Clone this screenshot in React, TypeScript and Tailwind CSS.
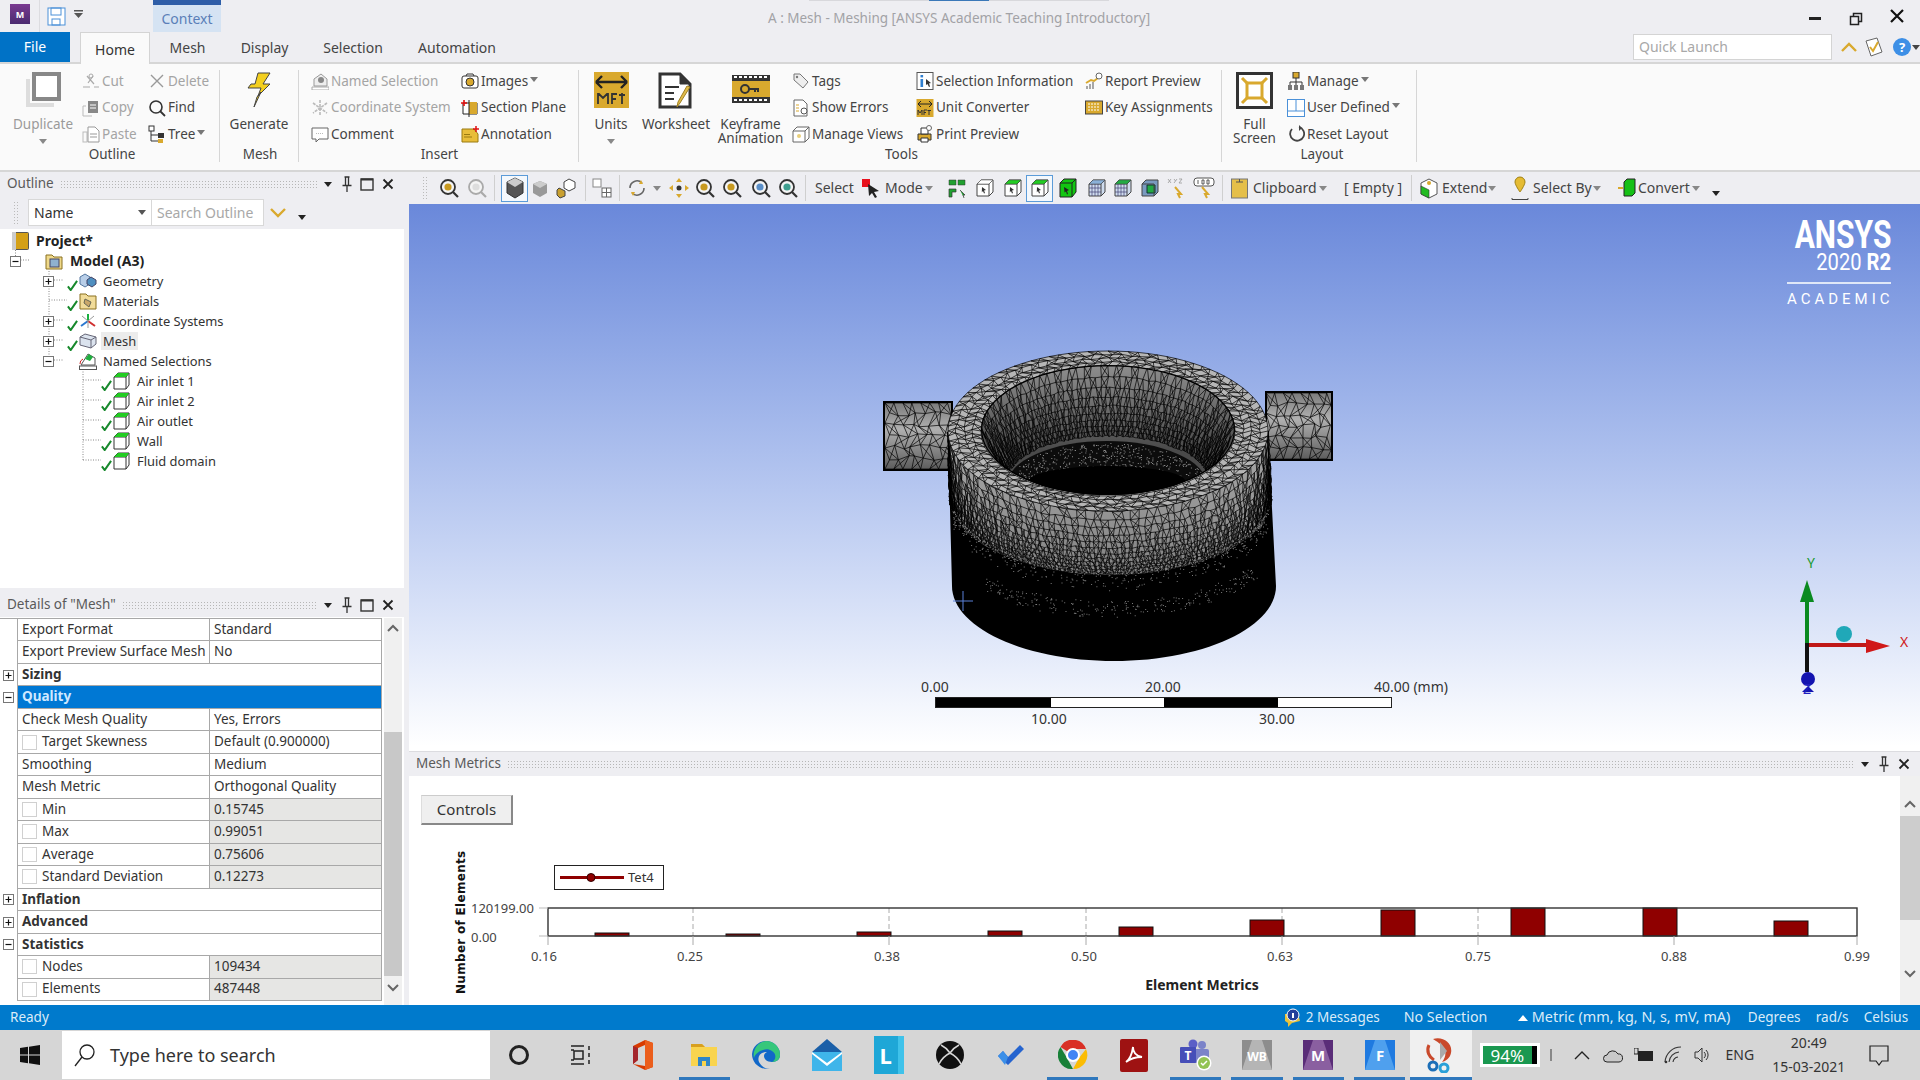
import React from "react";

/* ---------- procedural mesh ---------- */
let seed = 12345;
const rnd = () => {
  seed = (seed * 1664525 + 1013904223) % 4294967296;
  return seed / 4294967296;
};
const jit = (a: number) => (rnd() - 0.5) * 2 * a;
const lerp = (a: number, b: number, t: number) => a + (b - a) * t;
type P = [number, number];
const f = (n: number) => n.toFixed(1);
const seg = (a: P, b: P) => `M${f(a[0])} ${f(a[1])}L${f(b[0])} ${f(b[1])}`;
const dot = (x: number, y: number) => `M${f(x)} ${f(y)}h1v1h-1z`;

function meshRows(rows: P[][], closed = false) {
  let d = "";
  rows.forEach((row, i) => {
    for (let j = 0; j < row.length - 1; j++) d += seg(row[j], row[j + 1]);
    if (closed) d += seg(row[row.length - 1], row[0]);
    const next = rows[i + 1];
    if (!next) return;
    const ratio = next.length / row.length;
    row.forEach((p, j) => {
      const k = Math.round(j * ratio);
      d += seg(p, next[Math.min(k, next.length - 1)]);
      const k2 = (i + j) % 2 === 0 ? k + 1 : k - 1;
      if (k2 >= 0 && k2 < next.length) d += seg(p, next[k2]);
    });
  });
  return d;
}

const CX = 1108;
const wallPt = (th: number, h: number): P => {
  const k = h / 155;
  return [CX + 6 * k + lerp(160, 162, k) * Math.cos(th), 431 + h + lerp(80, 75, k) * Math.sin(th)];
};

function buildRim() {
  const rows: P[][] = [];
  const n = 100;
  for (let r = 0; r <= 4; r++) {
    const t = r / 4;
    const row: P[] = [];
    for (let i = 0; i < n; i++) {
      const th = ((i + (r % 2) * 0.5) / n) * Math.PI * 2;
      const a = r === 0 || r === 4 ? 0 : 1.2;
      row.push([CX + lerp(127, 160, t) * Math.cos(th) + jit(a), 431 + lerp(65, 80, t) * Math.sin(th) + jit(a * 0.7)]);
    }
    rows.push(row);
  }
  return meshRows(rows, true);
}

function buildWall() {
  const rows: P[][] = [];
  let h = 0;
  while (h < 68) {
    const t = Math.min(h / 64, 1);
    const e = Math.pow(t, 1.3);
    const n = Math.round(lerp(55, 200, e));
    const row: P[] = [];
    for (let i = 0; i <= n; i++) {
      const th = (i / n) * Math.PI;
      const p = wallPt(th, h + jit(1));
      row.push([p[0] + jit(1), p[1]]);
    }
    rows.push(row);
    h += lerp(9, 2.4, e);
  }
  return meshRows(rows);
}

function buildWallDots() {
  let d = "";
  for (let i = 0; i < 520; i++) {
    const th = 0.2 + rnd() * (Math.PI - 0.4);
    const h = 62 + Math.pow(rnd(), 2.4) * 20;
    const p = wallPt(th, h);
    d += dot(p[0], p[1]);
  }
  for (let i = 0; i < 260; i++) {
    const th = 0.45 + rnd() * 2.0;
    const x = 1110 + 160 * Math.cos(th) + jit(3);
    const y = 541 + 68 * Math.sin(th) + jit(8);
    d += dot(x, y);
  }
  return d;
}

function buildInner() {
  const rows: P[][] = [];
  let t = 0;
  while (t < 1) {
    const n = Math.round(lerp(50, 140, t));
    const row: P[] = [];
    for (let i = 0; i <= n; i++) {
      const th = Math.PI + (i / n) * Math.PI;
      row.push([
        CX + lerp(127, 100, t) * Math.cos(th) + jit(0.8),
        430 + 55 * t + lerp(65, 45, t) * Math.sin(th) + jit(0.8),
      ]);
    }
    rows.push(row);
    t += lerp(0.16, 0.05, t);
  }
  return meshRows(rows);
}

function buildFloorDots() {
  let d = "";
  for (let i = 0; i < 1300; i++) {
    const a = rnd() * Math.PI * 2;
    const r = Math.sqrt(rnd());
    d += dot(1107 + 100 * r * Math.cos(a), 485 + 42 * r * Math.sin(a));
  }
  return d;
}

function buildPipe(x0: number, y0: number, x1: number, y1: number) {
  const rows: P[][] = [];
  const nr = 6;
  for (let r = 0; r <= nr; r++) {
    const y = lerp(y0, y1, r / nr);
    const row: P[] = [];
    const edge = r === 0 || r === nr;
    for (let c = 0; c <= 7; c++) {
      const x = lerp(x0, x1, (c + (r % 2 ? 0.5 : 0)) / 7.5);
      row.push([x + (c === 0 || edge ? 0 : jit(2.4)), y + (edge ? 0 : jit(2.4))]);
    }
    rows.push(row);
  }
  return meshRows(rows);
}

const ellipsePts = (cx: number, cy: number, rx: number, ry: number, a0: number, a1: number, n = 60) => {
  const o: string[] = [];
  for (let i = 0; i <= n; i++) {
    const a = lerp(a0, a1, i / n);
    o.push(`${f(cx + rx * Math.cos(a))} ${f(cy + ry * Math.sin(a))}`);
  }
  return o;
};
const bandOf = (hb: number) => {
  const top: string[] = [];
  const bot: string[] = [];
  for (let i = 0; i <= 60; i++) {
    const th = (i / 60) * Math.PI;
    const a = wallPt(th, 0);
    const b = wallPt(th, hb);
    top.push(`${f(a[0])} ${f(a[1])}`);
    bot.unshift(`${f(b[0])} ${f(b[1])}`);
  }
  return "M" + top.concat(bot).join("L") + "Z";
};
const wallBand = bandOf(66);
const wallFull = bandOf(155);
const rimPath = buildRim();
const wallPath = buildWall();
const wallDots = buildWallDots();
const innerPath = buildInner();
const floorDots = buildFloorDots();
const pipeL = buildPipe(885, 403, 952, 469);
const pipeR = buildPipe(1266, 393, 1331, 459);
const innerOutline = "M" + ellipsePts(CX, 430, 127, 65, 0, Math.PI * 2, 80).join("L") + "Z";

function MeshModel() {
  return (
    <svg className="absolute left-0 top-0" width="1511" height="542" viewBox="409 204 1511 542">
      <defs>
        <linearGradient id="pipe" x1="0" y1="0" x2="0" y2="1">
          <stop offset="0" stopColor="#7a7a7a" />
          <stop offset="0.4" stopColor="#b0b0b0" />
          <stop offset="1" stopColor="#5c5c5c" />
        </linearGradient>
        <linearGradient id="band" gradientUnits="userSpaceOnUse" x1="0" y1="470" x2="0" y2="585">
          <stop offset="0" stopColor="#a0a0a0" />
          <stop offset="1" stopColor="#808080" />
        </linearGradient>
        <linearGradient id="innerg" gradientUnits="userSpaceOnUse" x1="0" y1="365" x2="0" y2="450">
          <stop offset="0" stopColor="#8e8e8e" />
          <stop offset="1" stopColor="#4a4a4a" />
        </linearGradient>
        <clipPath id="hole">
          <path d={innerOutline} />
        </clipPath>
      </defs>
      <rect x="884" y="402" width="68" height="68" fill="url(#pipe)" stroke="#000" strokeWidth="2" />
      <path d={pipeL} stroke="#000" strokeWidth="0.7" fill="none" />
      <rect x="1266" y="392" width="66" height="68" fill="url(#pipe)" stroke="#000" strokeWidth="2" />
      <path d={pipeR} stroke="#000" strokeWidth="0.7" fill="none" />
      <path d={wallFull} fill="#000" />
      <path d={wallBand} fill="url(#band)" />
      <path d={wallPath} stroke="#000" strokeWidth="0.7" fill="none" />
      <path d={wallDots} fill="#7c7c7c" />
      <ellipse cx={CX} cy="431" rx="160" ry="80" fill="#b6b6b6" />
      <path d={rimPath} stroke="#000" strokeWidth="0.7" fill="none" />
      <g clipPath="url(#hole)">
        <path d={innerOutline} fill="url(#innerg)" />
        <path d={innerPath} stroke="#000" strokeWidth="0.7" fill="none" />
        <ellipse cx="1107" cy="485" rx="100" ry="44" fill="#0c0c0c" />
        <path d={floorDots} fill="#8a8a8a" />
        <ellipse cx="1107" cy="481" rx="78" ry="15" fill="#000" />
        <path d={innerOutline} fill="none" stroke="#000" strokeWidth="2.5" />
      </g>
      <path d="M953 601h20M963 591v20" stroke="#5a80d8" strokeWidth="1" />
    </svg>
  );
}

function Triad() {
  return (
    <svg className="absolute left-0 top-0" width="1511" height="542" viewBox="409 204 1511 542">
      <path d="M1807 643V600" stroke="#0a8a20" strokeWidth="4" />
      <path d="M1807 580l-7 22h14z" fill="#0a8a20" />
      <path d="M1807 645H1866" stroke="#c01818" strokeWidth="4" />
      <path d="M1890 646l-24-7v14z" fill="#d01818" />
      <path d="M1807 643V672" stroke="#111" strokeWidth="4" />
      <circle cx="1808" cy="679" r="7" fill="#1414b0" />
      <path d="M1808 686l-6 6h12z" fill="#1414b0" />
      <circle cx="1844" cy="634" r="8" fill="#20a8b8" />
      <text x="1807" y="568" fill="#1a9a30" fontSize="14" fontFamily="Noto Sans, sans-serif">Y</text>
      <text x="1900" y="647" fill="#d02020" fontSize="14" fontFamily="Noto Sans, sans-serif">X</text>
      <text x="1803" y="694" fill="#2020c0" fontSize="14" fontFamily="Noto Sans, sans-serif">Z</text>
    </svg>
  );
}

/* ---------- icons ---------- */
const I = ({ w = 18, h = 18, vb = "0 0 18 18", children }: { w?: number; h?: number; vb?: string; children: React.ReactNode }) => (
  <svg width={w} height={h} viewBox={vb} className="shrink-0">
    {children}
  </svg>
);
const Caret = ({ c = "#666" }: { c?: string }) => (
  <svg width="8" height="5" viewBox="0 0 8 5" className="shrink-0"><path d="M0 0h8L4 5z" fill={c} /></svg>
);
const GOLD = "#d9a92e";
const ico = {
  cut: <I><path d="M1 15h7M12 15h5M5 4l7 8M11 4L6 11" stroke="#aaa" strokeWidth="1.2" fill="none" /><circle cx="9" cy="4" r="2" stroke="#aaa" fill="none" /></I>,
  copy: <I><path d="M1 7h3M1 7v10h9" stroke="#bbb" fill="none" /><rect x="6" y="2" width="10" height="12" fill="#888" /><path d="M8 6h6M8 9h6" stroke="#fff" /></I>,
  paste: <I><rect x="1" y="7" width="4" height="10" fill="none" stroke="#bbb" /><path d="M6 2h7l4 4v11H6z" fill="#fff" stroke="#999" /><path d="M8 9h7M8 12h7" stroke="#999" /></I>,
  del: <I><path d="M3 3l12 12M15 3L3 15" stroke="#999" strokeWidth="1.4" /></I>,
  find: <I><circle cx="8" cy="8" r="6" fill="none" stroke="#333" strokeWidth="1.6" /><path d="M12 12l5 5" stroke="#333" strokeWidth="1.8" /></I>,
  tree: <I><rect x="1" y="1" width="5" height="5" fill="#fff" stroke="#333" /><rect x="10" y="8" width="6" height="5" fill="#333" /><rect x="10" y="14" width="5" height="4" fill={GOLD} /><path d="M3 6v10h7M3 10h7" stroke="#333" fill="none" /></I>,
  named: <I><path d="M1 15h17v3H1z" fill="#fff" stroke="#aaa" /><path d="M3 7l7-5 6 5v7H3z" fill="#eee" stroke="#999" /><circle cx="10" cy="8" r="3" fill="#888" /></I>,
  coord: <I><path d="M9 1v16M2 4l14 10M16 4L2 14" stroke="#bbb" strokeWidth="1.6" strokeDasharray="3 1" /></I>,
  comment: <I><path d="M1 3h16v11H8l-3 3v-3H1z" fill="#fff" stroke="#666" /><path d="M5 8.5h8" stroke="#bbb" strokeDasharray="1 1" /></I>,
  images: <I><rect x="1" y="4" width="16" height="12" rx="2" fill="#fff" stroke="#333" /><circle cx="9" cy="10" r="4" fill={GOLD} stroke="#333" /><path d="M5 4l1-2h6l1 2" fill="none" stroke="#333" /></I>,
  section: <I><path d="M2 4h14v11H2z" fill="#fff" stroke="#222" /><path d="M8 3h8v12H8z" fill={GOLD} /><path d="M8 1v17" stroke="#222" /><path d="M3 1v6M0 4h6" stroke="#e01010" strokeWidth="1.6" /></I>,
  annot: <I><path d="M1 4h12l4 5v8H1z" fill="#e8bd3a" stroke="#9a7a10" /><path d="M3 12h8M3 9.5h6" stroke="#9a7a10" /><path d="M15 1v6M12 4h6" stroke="#e01010" strokeWidth="1.5" /></I>,
  tags: <I><path d="M2 2h6l8 8-5 6-9-8z" fill="#eee" stroke="#777" /><circle cx="5" cy="5" r="1.2" fill="#777" /></I>,
  errors: <I><path d="M2 1h9l4 4v12H2z" fill="#fff" stroke="#666" /><path d="M4 6h3M4 9h3M4 12h3" stroke={GOLD} /><circle cx="12" cy="12" r="3" fill="#fff" stroke="#555" /></I>,
  views: <I><path d="M1 6l4-4h12v11l-4 4H1z" fill="#fff" stroke="#666" /><path d="M1 6h12v11M13 6l4-4" fill="none" stroke="#666" /><circle cx="7" cy="11" r="2" fill="#e9cf7a" /></I>,
  selinfo: <I><rect x="1" y="0.5" width="16" height="17" fill="#fff" stroke="#555" /><rect x="4.5" y="3" width="2.6" height="2.4" fill="#2f7fd0" /><rect x="4.5" y="7" width="2.6" height="8" fill="#2f7fd0" /><path d="M10 7l5 4-2 .5 1 3-1 .5-1.5-3-1.5 1z" fill="#333" /></I>,
  unit: <I><rect x="0.5" y="0" width="17" height="18" fill={GOLD} /><path d="M2 5h14M2 5l3-3M2 5l3 3M16 5l-3-3M16 5l-3 3" stroke="#222" fill="none" /><path d="M2 16v-5l2 3 2-3v5M8 16v-5h3M8 13.5h2M13 11v5M11.5 11.5h3.5" stroke="#333" strokeWidth="1" fill="none" /></I>,
  print: <I><path d="M2 9h13v6H2z" fill={GOLD} stroke="#333" /><path d="M5 3h7v6H5zM5 13h7v4H5z" fill="#fff" stroke="#333" /><circle cx="13" cy="3" r="2.5" fill="#fff" stroke="#666" /></I>,
  report: <I><path d="M2 17v-3M5 17v-5M8 17v-7" stroke="#555" /><path d="M1 11l5-3 3 1 4-3" stroke={GOLD} strokeWidth="2" fill="none" /><circle cx="14" cy="4" r="3" fill="#fff" stroke="#666" /></I>,
  keys: <I><rect x="0.5" y="2" width="17" height="13" fill={GOLD} stroke="#444" /><path d="M3 5h12M3 8h12M3 11h12" stroke="#fff" strokeDasharray="2 1" /></I>,
  manage: <I><rect x="6" y="0" width="6" height="6" fill={GOLD} stroke="#333" /><path d="M9 6v4M3 10h12M3 10v3M9 10v3M15 10v3" stroke="#333" fill="none" /><rect x="1" y="13" width="4" height="5" fill="#777" /><rect x="7" y="13" width="4" height="5" fill="#777" /><rect x="13" y="13" width="4" height="5" fill="#777" /></I>,
  user: <I><rect x="0.5" y="0.5" width="17" height="17" fill="#fff" stroke="#4a90d8" /><path d="M9 1v11M1 12h16" stroke="#4a90d8" /></I>,
  reset: <I><path d="M5 4a7 7 0 1 0 7-2" fill="none" stroke="#444" strokeWidth="1.8" /><path d="M12 0v6l3-3z" fill="#444" /></I>,
};

const Big = ({ w, icon, children, caret, dim }: { w: string; icon: React.ReactNode; children: React.ReactNode; caret?: boolean; dim?: boolean }) => (
  <div className={`flex flex-col items-center shrink-0 ${w} ${dim ? "text-[#9a9a9a]" : ""}`}>
    <div className="h-[42px] flex items-start justify-center pt-[4px]">{icon}</div>
    <div className="text-center leading-[14px] whitespace-nowrap pt-[7px]">{children}</div>
    {caret && <div className="mt-[8px]"><Caret c="#888" /></div>}
  </div>
);
const Sm = ({ icon, children, dim, caret }: { icon: React.ReactNode; children: React.ReactNode; dim?: boolean; caret?: boolean }) => (
  <div className={`flex items-center h-[26.5px] whitespace-nowrap ${dim ? "text-[#a4a4a4]" : ""}`}>
    <span className="w-[20px] flex shrink-0">{icon}</span>
    <span>{children}</span>
    {caret && <span className="ml-[2px] mb-[4px]"><Caret c="#777" /></span>}
  </div>
);
const Group = ({ w, label, lp, children }: { w: string; label: string; lp: string; children: React.ReactNode }) => (
  <div className={`flex flex-col shrink-0 ${w}`}>
    <div className="flex h-[85px] pt-[4px]">{children}</div>
    <div className={`text-center leading-[14px] mt-[-2px] ${lp}`}>{label}</div>
  </div>
);
const RibSep = () => <div className="w-px shrink-0 bg-[#d6d6d6] mt-[6px] mb-[8px]" />;

const Mag = ({ c = "#c89a20", dim }: { c?: string; dim?: boolean }) => (
  <I w={22} h={22} vb="0 0 22 22">
    <circle cx="10" cy="10" r="7" fill="#f4f4f4" stroke={dim ? "#aaa" : "#333"} strokeWidth="1.8" />
    <path d="M15 15l5 5" stroke={dim ? "#aaa" : "#333"} strokeWidth="2.2" />
    <circle cx="10" cy="10" r="3.6" fill={c} />
  </I>
);
const Box = ({ c = "#fff", grid }: { c?: string; grid?: boolean }) => (
  <I w={22} h={22} vb="0 0 22 22">
    <path d="M3 7l4-4h12v12l-4 4H3z" fill={grid ? "#cfdcef" : "#fff"} stroke="#444" />
    <path d="M3 7h12v12M15 7l4-4" fill="none" stroke="#444" />
    <path d="M3 7l4-4h12l-4 4z" fill={c} stroke="#444" strokeWidth="0.5" />
    {grid ? <path d="M6 7v12M9 7v12M12 7v12M3 11h12M3 15h12" stroke="#447" strokeWidth="0.7" /> : <path d="M8 10l4 3-2 .5 1 2.5-1 .5-1-2.5-1.2 1.2z" fill="#333" />}
  </I>
);
const Sel = ({ children, w }: { children: React.ReactNode; w: string }) => (
  <div className={`h-[27px] shrink-0 ${w} flex items-center justify-center border border-[#5b9bd8] bg-[#f4f8fc]`}>{children}</div>
);
const TS = () => <div className="w-px h-[26px] bg-[#cfcfcf] shrink-0" />;
const Hdr = ({ t, big }: { t: string; big?: boolean }) => (
  <div className="flex items-center h-[24px] bg-[#eeeef2] text-[#5a5a5a] shrink-0">
    <span className="ml-[7px] whitespace-nowrap">{t}</span>
    <div className="flex-1 h-[8px] mx-[6px] bg-[radial-gradient(#b6b6b6_0.7px,transparent_0.8px)] bg-size-[3px_3px]" />
    {big && <span className="mr-[9px]"><Caret c="#222" /></span>}
    {!big && <span className="mr-[9px]"><Caret c="#222" /></span>}
    <span className={big ? "mr-[7px]" : "mr-[8px]"}><I w={12} h={16} vb="0 0 12 16"><path d="M3.5 1h5M4.5 1v8M7.5 1v8M1.5 9.5h9M6 10v6" stroke="#333" strokeWidth="1.3" fill="none" /></I></span>
    {big && <span className="mr-[8px]"><I w={14} h={14} vb="0 0 14 14"><rect x="1" y="2" width="12" height="11" fill="none" stroke="#333" strokeWidth="1.4" /><path d="M1 2.5h12" stroke="#333" strokeWidth="2" /></I></span>}
    <span className="mr-[10px]"><I w={12} h={12} vb="0 0 12 12"><path d="M1.5 1.5l9 9M10.5 1.5l-9 9" stroke="#222" strokeWidth="1.8" /></I></span>
  </div>
);

/* ---------- outline tree ---------- */
const Check = () => (
  <svg width="11" height="11" viewBox="0 0 12 12" className="block mt-[9px]"><path d="M1 7l3 4 7-10" fill="none" stroke="#17892c" strokeWidth="2.2" /></svg>
);
const Exp = ({ open }: { open?: boolean }) => (
  <svg width="11" height="11" viewBox="0 0 11 11" className="shrink-0 bg-white"><rect x="0.5" y="0.5" width="10" height="10" fill="#fff" stroke="#777" /><path d={open ? "M2.5 5.5h6" : "M2.5 5.5h6M5.5 2.5v6"} stroke="#111" strokeWidth="1.2" /></svg>
);
const TI = {
  project: <I w={17} h={18} vb="0 0 17 18"><rect x="0.5" y="0.5" width="16" height="17" rx="1" fill="#d4a017" stroke="#555" /><rect x="0" y="0" width="4" height="18" fill="#ccc" /></I>,
  model: <I w={18} h={18} vb="0 0 18 18"><path d="M1 3h6l2 2h8v12H1z" fill="#efd98a" stroke="#8a7020" /><rect x="5" y="7" width="9" height="8" fill="#8fb1cf" stroke="#446" /></I>,
  geo: <I w={18} h={16} vb="0 0 18 16"><path d="M1 4l5-3 5 3v7l-5 3-5-3z" fill="#b8cee8" stroke="#5577a0" /><path d="M8 7l4-3 5 3v4l-4 3-5-3z" fill="#4f8fc0" stroke="#446" /></I>,
  mat: <I w={18} h={18} vb="0 0 18 18"><path d="M1 2h6l2 2h8v13H1z" fill="#f1dc9a" stroke="#8a7020" /><path d="M6 7l6 3-2 5-5-4z" fill="#c9a86a" stroke="#665" /></I>,
  coord: <I w={18} h={18} vb="0 0 18 18"><path d="M9 9V2" stroke="#19b040" strokeWidth="2" /><path d="M9 9L2 14" stroke="#2a78d0" strokeWidth="2" /><path d="M9 9l7 5" stroke="#d03030" strokeWidth="2" /><path d="M9 9L3 4M9 9l6-5M9 9v7" stroke="#999" strokeWidth="1" /></I>,
  mesh: <I w={18} h={16} vb="0 0 18 16"><path d="M1 4l5-3 11 3v7l-5 4-11-3z" fill="#dbe3ee" stroke="#667" /><path d="M1 4l11 3v8M12 7l5-3" fill="none" stroke="#667" /></I>,
  named: <I w={18} h={18} vb="0 0 18 18"><rect x="0.5" y="14" width="17" height="3.5" fill="#fff" stroke="#555" /><path d="M2 13l7-11 7 4v7z" fill="#fff" stroke="#555" /><path d="M6 7l4-5 4 3-3 4z" fill="#1fae3e" /><path d="M1 12a5 5 0 0 1 3-5" stroke="#d02020" fill="none" /></I>,
  ns: <I w={17} h={18} vb="0 0 17 18"><path d="M1 5l4-4h11v12l-3 4H1z" fill="#fff" stroke="#333" /><path d="M1 5h12v12M13 5l3-4" fill="none" stroke="#333" /><path d="M1 5l4-4h11l-3 4z" fill="#22cc22" /></I>,
};
const L2 = ({ exp, open, check, icon, t, hl }: { exp?: boolean; open?: boolean; check?: boolean; icon: React.ReactNode; t: string; hl?: boolean }) => (
  <div className="flex items-center h-5 pl-[43px]">
    <span className="w-[24px] flex shrink-0">{exp && <Exp open={open} />}</span>
    <span className="w-[12px] shrink-0 self-start">{check && <Check />}</span>
    <span className="w-[17px] flex shrink-0">{icon}</span>
    <span className={`ml-[5px] px-[2px] leading-[18px] whitespace-nowrap text-[12.9px] ${hl ? "bg-[#ececec]" : ""}`}>{t}</span>
  </div>
);
const L3 = ({ t }: { t: string }) => (
  <div className="flex items-center h-5 pl-[101px]">
    <span className="w-[12px] shrink-0 self-start"><Check /></span>
    <span className="w-[17px] flex shrink-0">{TI.ns}</span>
    <span className="ml-[7px] whitespace-nowrap text-[12.9px]">{t}</span>
  </div>
);

/* ---------- details ---------- */
type D = { l: string; v?: string; cb?: boolean; g?: boolean; ro?: boolean; exp?: "+" | "-"; sel?: boolean };
const details: D[] = [
  { l: "Export Format", v: "Standard" },
  { l: "Export Preview Surface Mesh", v: "No" },
  { l: "Sizing", exp: "+" },
  { l: "Quality", exp: "-", sel: true },
  { l: "Check Mesh Quality", v: "Yes, Errors" },
  { l: "Target Skewness", v: "Default (0.900000)", cb: true },
  { l: "Smoothing", v: "Medium" },
  { l: "Mesh Metric", v: "Orthogonal Quality" },
  { l: "Min", v: "0.15745", cb: true, ro: true },
  { l: "Max", v: "0.99051", cb: true, ro: true },
  { l: "Average", v: "0.75606", cb: true, ro: true },
  { l: "Standard Deviation", v: "0.12273", cb: true, ro: true },
  { l: "Inflation", exp: "+" },
  { l: "Advanced", exp: "+" },
  { l: "Statistics", exp: "-" },
  { l: "Nodes", v: "109434", cb: true, ro: true },
  { l: "Elements", v: "487448", cb: true, ro: true },
];
const DRow = ({ r }: { r: D }) => (
  <div className="flex h-[22.47px] items-stretch">
    <div className="w-[17px] flex items-center justify-center shrink-0 bg-white">{r.exp && <Exp open={r.exp === "-"} />}</div>
    {r.v === undefined ? (
      <div className={`w-[365px] flex items-center pl-[4px] border-b border-x border-[#a8a8a8] font-bold whitespace-nowrap ${r.sel ? "bg-[#0078d4] text-[#cfe8ff]" : "bg-white text-[#333]"}`}>{r.l}</div>
    ) : (
      <>
        <div className="w-[193px] flex items-center pl-[4px] border-b border-x border-[#a8a8a8] bg-white whitespace-nowrap overflow-hidden">
          {r.cb && <span className="w-[15px] h-[15px] border border-[#d0d0d0] bg-white mr-[5px] shrink-0" />}
          {r.l}
        </div>
        <div className={`w-[172px] flex items-center pl-[4px] border-b border-r border-[#a8a8a8] whitespace-nowrap ${r.ro ? "bg-[#e6e6e4]" : "bg-white"}`}>{r.v}</div>
      </>
    )}
  </div>
);
const Chev = ({ up }: { up?: boolean }) => (
  <svg width="12" height="8" viewBox="0 0 12 8" className="shrink-0"><path d={up ? "M1 7l5-5 5 5" : "M1 1l5 5 5-5"} fill="none" stroke="#666" strokeWidth="2" /></svg>
);

/* ---------- chart ---------- */
const bars: [number, number][] = [
  [595, 933], [726, 934], [857, 932], [988, 931], [1119, 927], [1250, 920], [1381, 910], [1511, 908], [1643, 908], [1774, 921],
];
const ticks = [
  [548, "0.16", 544], [693, "0.25", 690], [889, "0.38", 887], [1086, "0.50", 1084], [1282, "0.63", 1280], [1478, "0.75", 1478], [1674, "0.88", 1674], [1857, "0.99", 1857],
] as [number, string, number][];
function Chart() {
  const ff = "Noto Sans, sans-serif";
  return (
    <svg width="1491" height="175" viewBox="409 830 1491 175" className="block shrink-0">
      <rect x="554.5" y="865.5" width="109" height="24" fill="#fff" stroke="#222" />
      <path d="M560 877.5h64" stroke="#8f0000" strokeWidth="3" />
      <circle cx="591" cy="877.5" r="4" fill="#8f0000" stroke="#300" />
      <text x="628" y="882" fontSize="13" fill="#333" fontFamily={ff}>Tet4</text>
      {ticks.slice(1, 7).map(([x]) => (
        <path key={x} d={`M${x} 908V936`} stroke="#aaa" strokeDasharray="5 3" />
      ))}
      {bars.map(([x, y]) => (
        <rect key={x} x={x} y={y} width="34" height={936 - y} fill="#8f0000" stroke="#111" />
      ))}
      <rect x="548" y="908" width="1309" height="28" fill="none" stroke="#333" strokeWidth="1.4" />
      <path d="M539 936h9M539 908h9" stroke="#bbb" />
      {ticks.map(([x]) => (
        <path key={x} d={`M${x} 936v9`} stroke="#aaa" />
      ))}
      {ticks.map(([x, t, lx]) => (
        <text key={t} x={lx} y="961" fontSize="13" textAnchor="middle" fill="#444" fontFamily={ff}>{t}</text>
      ))}
      <text x="471" y="913" fontSize="13" fill="#444" fontFamily={ff}>120199.00</text>
      <text x="471" y="942" fontSize="13" fill="#444" fontFamily={ff}>0.00</text>
      <text x="1202" y="990" fontSize="14" fontWeight="700" textAnchor="middle" fill="#222" fontFamily={ff}>Element Metrics</text>
      <text transform="translate(465 994) rotate(-90)" fontSize="12" fontWeight="700" letterSpacing="0.3" fill="#111" fontFamily="DejaVu Sans, sans-serif">Number of Elements</text>
    </svg>
  );
}

/* ---------- taskbar ---------- */
const TB = ({ on, active, children }: { on?: boolean; active?: boolean; children: React.ReactNode }) => (
  <div className={`relative w-[61.4px] h-full flex items-center justify-center shrink-0 ${active ? "bg-[#f0f0f0]" : ""}`}>
    {children}
    {on && <div className={`absolute bottom-0 h-[3px] bg-[#2f78bd] ${active ? "left-0 right-0" : "left-[5px] right-[5px]"}`} />}
  </div>
);
const Square = ({ c, t, c2 }: { c: string; c2?: string; t: string }) => (
  <svg width="30" height="30" viewBox="0 0 30 30">
    <rect width="30" height="30" fill={c} />
    {c2 && <path d="M10 0h10l10 30H0z" fill={c2} />}
    <text x="15" y="21" fontSize={t.length > 1 ? 12 : 15} fontWeight="700" textAnchor="middle" fill="#fff" fontFamily="Noto Sans, sans-serif">{t}</text>
  </svg>
);

export default function App() {
  return (
    <div className="w-[1920px] h-[1080px] overflow-hidden flex flex-col bg-white text-[#444] text-[13.5px] leading-none font-['Noto_Sans',sans-serif]">
      {/* title */}
      <div className="relative h-[32px] bg-[#eeeef2] flex items-start shrink-0">
        <div className="absolute top-0 left-[809px] w-[300px] h-[1px] bg-[#d8d8dc]" />
        <div className="absolute top-0 left-[929px] w-[60px] h-[1px] bg-[#3b78b8]" />
        <div className="ml-[10px] mt-[4px] w-[20px] h-[20px] bg-linear-to-b from-[#7a3a90] to-[#4a2a70] flex items-center justify-center text-white text-[9px] font-bold shrink-0">M</div>
        <div className="ml-[9px] w-px h-[32px] bg-[#dcdce0]" />
        <div className="ml-[7px] mt-[7px] flex"><I w={19} h={19} vb="0 0 19 19"><rect x="1" y="1" width="17" height="17" fill="#fff" stroke="#4a90d8" /><rect x="4" y="1" width="10" height="7" fill="none" stroke="#4a90d8" /><rect x="5" y="12" width="8" height="6" fill="none" stroke="#4a90d8" /></I></div>
        <div className="ml-[8px] mt-[10px]"><svg width="9" height="9" viewBox="0 0 9 9"><path d="M0 0h9v1.5H0zM0 3h9L4.5 8z" fill="#555" /></svg></div>
        <div className="ml-[70px] w-[68px] h-[32px] bg-[#d5e3f3] border-t-[5px] border-[#2d5da8] flex items-center justify-center text-[#5b7fb8] text-[14px]">Context</div>
        <div className="ml-[547px] w-[382px] mt-[12px] text-center text-[#a2a2a6] whitespace-nowrap text-[13.5px]">A : Mesh - Meshing [ANSYS Academic Teaching Introductory]</div>
        <div className="ml-[659px] mt-[17px]"><div className="w-[12px] h-[3px] bg-[#222]" /></div>
        <div className="ml-[28px] mt-[12px] flex"><I w={14} h={14} vb="0 0 14 14"><rect x="1.5" y="4.5" width="8" height="8" fill="none" stroke="#222" strokeWidth="1.5" /><path d="M4.5 4V1.5h8v8H10" fill="none" stroke="#222" strokeWidth="1.5" /></I></div>
        <div className="ml-[27px] mt-[9px] flex"><I w={14} h={14} vb="0 0 14 14"><path d="M1 1l12 12M13 1L1 13" stroke="#111" strokeWidth="2.2" /></I></div>
      </div>
      {/* tabs */}
      <div className="h-[30px] bg-[#eeeef2] flex items-stretch shrink-0">
        <div className="w-[70px] bg-[#0072c6] text-white flex items-center justify-center text-[14px]">File</div>
        <div className="relative z-10 ml-[10px] w-[70px] bg-[#fafafa] border-x border-t border-[#d4d4d4] flex items-center justify-center text-[14px] text-[#333] mb-[-2px] pt-[2px]">Home</div>
        <div className="ml-[20px] w-[35px] flex items-center justify-center text-[14px] whitespace-nowrap pt-[2px]">Mesh</div>
        <div className="ml-[36px] w-[47px] flex items-center justify-center text-[14px] whitespace-nowrap pt-[2px]">Display</div>
        <div className="ml-[36px] w-[58px] flex items-center justify-center text-[14px] whitespace-nowrap pt-[2px]">Selection</div>
        <div className="ml-[37px] w-[76px] flex items-center justify-center text-[14px] whitespace-nowrap pt-[2px]">Automation</div>
        <div className="ml-[1138px] my-[2px] w-[199px] bg-white border border-[#d4d4d4] flex items-center pl-[5px] text-[#a8a8a8] text-[14px]">Quick Launch</div>
        <div className="ml-[9px] flex items-center"><svg width="16" height="10" viewBox="0 0 16 10"><path d="M1 9l7-7 7 7" fill="none" stroke="#d9a92e" strokeWidth="2.4" /></svg></div>
        <div className="ml-[8px] flex items-center"><I w={18} h={20} vb="0 0 18 20"><path d="M1 4l11-3 5 14-11 4z" fill="#fff" stroke="#666" /><path d="M5 10l3 4 5-9" fill="none" stroke="#d9a92e" strokeWidth="2" /></I></div>
        <div className="ml-[10px] flex items-center"><div className="w-[18px] h-[18px] rounded-full bg-[#3d8fe6] text-white text-[13px] font-bold flex items-center justify-center">?</div></div>
        <div className="ml-[1px] flex items-center"><Caret c="#444" /></div>
      </div>
      {/* ribbon */}
      <div className="h-[110px] bg-[#fafafa] border-t-2 border-b-2 border-[#d6d6d6] flex shrink-0">
        <Group w="w-[219px]" label="Outline" lp="pl-[5px]">
          <div className="ml-[13px]">
            <Big w="w-[60px]" dim caret icon={<I w={36} h={36} vb="0 0 36 36"><path d="M1 7v28h28v-4H5V7z" fill="#ddd" /><rect x="9" y="2" width="25" height="25" fill="#fff" stroke="#888" strokeWidth="4" /></I>}>Duplicate</Big>
          </div>
          <div className="ml-[9px] w-[66px] shrink-0">
            <Sm dim icon={ico.cut}>Cut</Sm>
            <Sm dim icon={ico.copy}>Copy</Sm>
            <Sm dim icon={ico.paste}>Paste</Sm>
          </div>
          <div className="w-[70px] shrink-0">
            <Sm dim icon={ico.del}>Delete</Sm>
            <Sm icon={ico.find}>Find</Sm>
            <Sm caret icon={ico.tree}>Tree</Sm>
          </div>
        </Group>
        <RibSep />
        <Group w="w-[78px]" label="Mesh" lp="pl-[2px]">
          <Big w="w-[78px]" icon={<I w={24} h={36} vb="0 0 24 36"><path d="M11 1h12l-7 11h7L11 24l3-8H1l3-4H8z M14 20L7 35l3-10z" fill="#f3cf1f" stroke="#444" strokeWidth="1" /></I>}>Generate</Big>
        </Group>
        <RibSep />
        <Group w="w-[279px]" label="Insert" lp="pl-[2px]">
          <div className="ml-[12px] w-[150px] shrink-0">
            <Sm dim icon={ico.named}>Named Selection</Sm>
            <Sm dim icon={ico.coord}>Coordinate System</Sm>
            <Sm icon={ico.comment}>Comment</Sm>
          </div>
          <div className="w-[110px] shrink-0">
            <Sm caret icon={ico.images}>Images</Sm>
            <Sm icon={ico.section}>Section Plane</Sm>
            <Sm icon={ico.annot}>Annotation</Sm>
          </div>
        </Group>
        <RibSep />
        <Group w="w-[642px]" label="Tools" lp="pl-[3px]">
          <Big w="w-[64px]" caret icon={<I w={35} h={36} vb="0 0 35 36"><rect width="35" height="36" fill={GOLD} /><path d="M2 10h31M2 10l6-6M2 10l6 6M33 10l-6-6M33 10l-6 6" stroke="#222" strokeWidth="2.4" fill="none" /><path d="M4 32v-10h1l4 4 4-4h1v10M18 32V22h5M18 27h4M28 21v11M25 23h6" stroke="#333" strokeWidth="1.8" fill="none" /></I>}>Units</Big>
          <Big w="w-[66px]" icon={<I w={36} h={37} vb="0 0 36 37"><path d="M2 2h20l10 10v23H2z" fill="#fff" stroke="#333" strokeWidth="3" /><path d="M22 2v10h10" fill="#333" stroke="#333" /><path d="M7 15h14M7 21h9M7 27h9" stroke="#333" strokeWidth="2.2" /><path d="M32 15L22 31l-3 4 1-5 9-16z" fill="#e0bb4a" stroke="#a08020" /></I>}>Worksheet</Big>
          <Big w="w-[83px]" icon={<div className="pt-[3px]"><I w={38} h={28} vb="0 0 38 28"><rect width="38" height="28" fill={GOLD} /><path d="M0 0h38v6H0zM0 22h38v6H0z" fill="#333" /><path d="M2 2h34M2 25h34" stroke="#fff" strokeWidth="2" strokeDasharray="3 2" /><circle cx="13" cy="14" r="4" fill="none" stroke="#333" strokeWidth="2" /><path d="M17 14h10M23 14v3M26 14v3" stroke="#333" strokeWidth="2" /></I></div>}>Keyframe<br />Animation</Big>
          <div className="w-[124px] shrink-0">
            <Sm icon={ico.tags}>Tags</Sm>
            <Sm icon={ico.errors}>Show Errors</Sm>
            <Sm icon={ico.views}>Manage Views</Sm>
          </div>
          <div className="w-[169px] shrink-0">
            <Sm icon={ico.selinfo}>Selection Information</Sm>
            <Sm icon={ico.unit}>Unit Converter</Sm>
            <Sm icon={ico.print}>Print Preview</Sm>
          </div>
          <div className="w-[130px] shrink-0">
            <Sm icon={ico.report}>Report Preview</Sm>
            <Sm icon={ico.keys}>Key Assignments</Sm>
          </div>
        </Group>
        <RibSep />
        <Group w="w-[194px]" label="Layout" lp="pl-[6px]">
          <Big w="w-[65px]" icon={<I w={37} h={37} vb="0 0 37 37"><rect x="1.5" y="1.5" width="34" height="34" fill="#fff" stroke="#333" strokeWidth="3" /><rect x="11" y="11" width="15" height="15" fill="none" stroke={GOLD} strokeWidth="3" /><path d="M6 6l6 6M31 6l-6 6M6 31l6-6M31 31l-6-6" stroke={GOLD} strokeWidth="3" /></I>}>Full<br />Screen</Big>
          <div className="w-[120px] shrink-0">
            <Sm caret icon={ico.manage}>Manage</Sm>
            <Sm caret icon={ico.user}>User Defined</Sm>
            <Sm icon={ico.reset}>Reset Layout</Sm>
          </div>
        </Group>
        <RibSep />
      </div>
      {/* main */}
      <div className="flex h-[833px] shrink-0">
        <div className="w-[409px] shrink-0 flex flex-col bg-[#eeeef2]">
          <div className="h-[416px] flex flex-col w-[404px]">
            <Hdr t="Outline" big />
            <div className="h-[33px] flex items-center shrink-0">
              <div className="ml-[13px] w-[6px] h-[24px] bg-[radial-gradient(#bbb_0.7px,transparent_0.8px)] bg-size-[3px_3px]" />
              <div className="ml-[9px] w-[124px] h-[27px] bg-white border border-[#d8d8d8] flex items-center justify-between px-[5px] text-[14px] text-[#333]">Name<Caret c="#555" /></div>
              <div className="w-[112px] h-[27px] bg-white border-y border-r border-[#d8d8d8] flex items-center pl-[5px] text-[#a8a8a8] text-[14px] whitespace-nowrap">Search Outline</div>
              <div className="ml-[6px]"><svg width="16" height="10" viewBox="0 0 16 10"><path d="M1 1l7 7 7-7" fill="none" stroke="#d9a92e" strokeWidth="2.4" /></svg></div>
              <div className="ml-[12px] mt-[10px]"><Caret c="#222" /></div>
            </div>
            <div className="relative flex-1 bg-white pt-[2px] text-[#333]">
              <svg className="absolute left-0 top-0" width="150" height="240" viewBox="0 229 150 240">
                <path d="M15.5 250v10h14M49 271v90M49 280h14M49 300h18M49 320h14M49 340h14M49 360h14M83 369v91M83 380h18M83 400h18M83 420h18M83 440h18M83 460h18" stroke="#888" strokeDasharray="1 1.5" fill="none" />
              </svg>
              <div className="relative flex items-center h-5 pl-[12px]"><span className="w-[17px] flex">{TI.project}</span><span className="ml-[7px] font-bold text-[#222] text-[14px]">Project*</span></div>
              <div className="relative flex items-center h-5 pl-[10px]"><span className="w-[35px] flex"><Exp open /></span><span className="w-[18px] flex">{TI.model}</span><span className="ml-[7px] font-bold text-[#222] text-[14px]">Model (A3)</span></div>
              <div className="relative">
                <L2 exp check icon={TI.geo} t="Geometry" />
                <L2 check icon={TI.mat} t="Materials" />
                <L2 exp check icon={TI.coord} t="Coordinate Systems" />
                <L2 exp check icon={TI.mesh} t="Mesh" hl />
                <L2 exp open icon={TI.named} t="Named Selections" />
                <L3 t="Air inlet 1" />
                <L3 t="Air inlet 2" />
                <L3 t="Air outlet" />
                <L3 t="Wall" />
                <L3 t="Fluid domain" />
              </div>
            </div>
          </div>
          <div className="h-[5px] shrink-0" />
          <div className="flex flex-col w-[404px]">
            <Hdr t='Details of "Mesh"' big />
            <div className="flex bg-white h-[388px] pt-[1px]">
              <div className="w-[382px] shrink-0 border-t border-[#a8a8a8] text-[#333] h-[383px]">
                {details.map((r) => (
                  <DRow key={r.l} r={r} />
                ))}
              </div>
              <div className="ml-[2px] w-[18px] h-[387px] bg-[#f0f0f0] flex flex-col items-center">
                <div className="mt-[6px]"><Chev up /></div>
                <div className="mt-[100px] w-full h-[244px] bg-[#c8c8c8]" />
                <div className="mt-[8px]"><Chev /></div>
              </div>
            </div>
          </div>
        </div>
        <div className="flex-1 flex flex-col min-w-0">
          {/* toolbar */}
          <div className="h-[32px] bg-[#eeeef2] flex items-center shrink-0 whitespace-nowrap text-[14px] text-[#444]">
            <div className="ml-[13px] w-[6px] h-[24px] bg-[radial-gradient(#bbb_0.7px,transparent_0.8px)] bg-size-[3px_3px] shrink-0" />
            <div className="ml-[10px] flex"><Mag /></div>
            <div className="ml-[6px] flex"><Mag dim c="#ddd" /></div>
            <div className="ml-[6px]"><TS /></div>
            <div className="ml-[6px]"><Sel w="w-[27px]"><I w={20} h={22} vb="0 0 20 22"><path d="M10 1l8 4v11l-8 5-8-5V5z" fill="#555" stroke="#333" /><path d="M2 5l8 5 8-5-8-4z" fill="#ccc" /></I></Sel></div>
            <div className="ml-[1px] flex"><I w={22} h={22} vb="0 0 22 22"><path d="M11 4l7 3v9l-7 4-7-4V7z" fill="#999" /><path d="M4 7l7 4 7-4-7-3z" fill="#ccc" /></I></div>
            <div className="ml-[5px] flex"><I w={22} h={22} vb="0 0 22 22"><path d="M13 2l6 3v6l-6 3-5-3V5z" fill="#fff" stroke="#444" /><path d="M3 11l6 3v5l-5 2-3-3v-5z" fill="#c9a030" stroke="#444" /></I></div>
            <div className="ml-[7px]"><TS /></div>
            <div className="ml-[5px] flex"><I w={22} h={22} vb="0 0 22 22"><rect x="2" y="2" width="8" height="8" fill="#fff" stroke="#888" /><rect x="11" y="11" width="9" height="9" fill="#fff" stroke="#666" /><path d="M15.5 11v9M11 15.5h9" stroke="#666" /></I></div>
            <div className="ml-[6px]"><TS /></div>
            <div className="ml-[6px] flex"><I w={22} h={22} vb="0 0 22 22"><path d="M4 11a7 7 0 0 1 12-5M18 11a7 7 0 0 1-12 5" fill="none" stroke="#666" strokeWidth="1.6" /><path d="M15 3l2 4-4 0z" fill="#d9a92e" /><path d="M7 19l-2-4 4 0z" fill="#d9a92e" /></I></div>
            <div className="ml-[5px]"><Caret c="#888" /></div>
            <div className="ml-[7px] flex"><I w={22} h={22} vb="0 0 22 22"><circle cx="11" cy="11" r="2.5" fill="#333" /><path d="M11 1l3 4H8zM11 21l3-4H8zM1 11l4-3v6zM21 11l-4-3v6z" fill="#d9a92e" /></I></div>
            <div className="ml-[4px] flex"><Mag /></div>
            <div className="ml-[5px] flex"><Mag /></div>
            <div className="ml-[7px] flex"><Mag c="#5b8fc8" /></div>
            <div className="ml-[5px] flex"><Mag c="#3f9f8f" /></div>
            <div className="ml-[6px]"><TS /></div>
            <div className="ml-[9px] w-[39px] text-[14px]">Select</div>
            <div className="ml-[6px] flex"><I w={22} h={22} vb="0 0 22 22"><rect x="2" y="2" width="8" height="8" fill="#e8101c" /><path d="M8 7l11 7-5 1 3 5-2 1-3-5-3 3z" fill="#222" /></I></div>
            <div className="ml-[3px] w-[37px] text-[14px]">Mode</div>
            <div className="ml-[3px]"><Caret c="#888" /></div>
            <div className="ml-[13px] flex"><I w={22} h={22} vb="0 0 22 22"><path d="M3 3h7v5H3zM12 3h7v5h-7z" fill="#20a030" stroke="#333" strokeWidth="0.5" /><path d="M3 12h7v3H6v5H3zM14 13l5 5-2 0 1 3" fill="#20a030" stroke="#333" strokeWidth="0.7" /></I></div>
            <div className="ml-[6px] flex"><Box /></div>
            <div className="ml-[6px] flex"><Box c="#22cc22" /></div>
            <div className="ml-[2px]"><Sel w="w-[27px]"><Box c="#22cc22" /></Sel></div>
            <div className="ml-[4px] flex"><I w={22} h={22} vb="0 0 22 22"><path d="M3 6l4-4h12v13l-4 5H3z" fill="#12c612" stroke="#222" /><path d="M3 6h12v14M15 6l4-4" fill="none" stroke="#222" /><path d="M7 10l5 3-2 1 1 3-1 .5-1-3-1.5 1z" fill="#222" /></I></div>
            <div className="ml-[7px] flex"><Box c="#8ab0d8" grid /></div>
            <div className="ml-[4px] flex"><Box c="#22aa44" grid /></div>
            <div className="ml-[5px] flex"><I w={22} h={22} vb="0 0 22 22"><path d="M3 7l4-4h12v12l-4 4H3z" fill="#7a9abf" stroke="#444" /><path d="M8 8h8v8H8z" fill="#22aa44" stroke="#133" /><path d="M3 7h12v12" fill="none" stroke="#444" /></I></div>
            <div className="ml-[5px] flex"><I w={22} h={22} vb="0 0 22 22"><path d="M2 2l3 4M5 2L2 6M8 2l1.5 2L8 6M11 2L9.5 4M13 2h3l-3 4h3" stroke="#999" strokeWidth="0.8" fill="none" /><path d="M9 10l6 7-3 0 2 4" stroke="#d9a92e" strokeWidth="2" fill="none" /></I></div>
            <div className="ml-[5px] flex"><I w={22} h={22} vb="0 0 22 22"><rect x="1" y="1" width="20" height="8" rx="3" fill="#fff" stroke="#555" /><path d="M5 3v4M9 3h2v4H9zM14 3h2v4h-2z" stroke="#333" strokeWidth="0.8" fill="none" /><path d="M9 10l6 7-3 0 2 4" stroke="#d9a92e" strokeWidth="2" fill="none" /></I></div>
            <div className="ml-[7px]"><TS /></div>
            <div className="ml-[8px] flex"><I w={17} h={22} vb="0 0 17 22"><rect x="0.5" y="2" width="16" height="19" fill="#e5bf4a" stroke="#777" /><path d="M5 5h7M8.5 2v3" stroke="#555" /></I></div>
            <div className="ml-[5px] w-[63px] text-[14px]">Clipboard</div>
            <div className="ml-[3px]"><Caret c="#888" /></div>
            <div className="ml-[17px] w-[58px] text-[14px]">[ Empty ]</div>
            <div className="ml-[9px]"><TS /></div>
            <div className="ml-[8px] flex"><I w={18} h={22} vb="0 0 18 22"><path d="M9 2l8 4v11l-8 4-8-4V6z" fill="#fff" stroke="#555" /><path d="M1 9l8 4v8l-8-4z" fill="#22bb22" stroke="#333" strokeWidth="0.6" /><circle cx="9" cy="6" r="2" fill="#d9a92e" /></I></div>
            <div className="ml-[4px] w-[44px] text-[14px]">Extend</div>
            <div className="ml-[2px]"><Caret c="#888" /></div>
            <div className="ml-[15px] flex"><I w={18} h={24} vb="0 0 18 24"><path d="M9 1a5 5 0 0 1 5 5c0 3-5 10-5 10S4 9 4 6a5 5 0 0 1 5-5z" fill="#e5bb33" stroke="#a08010" /><path d="M1 22v1.5h16V22" fill="none" stroke="#444" /></I></div>
            <div className="ml-[4px] w-[57px] text-[14px]">Select By</div>
            <div className="ml-[3px]"><Caret c="#888" /></div>
            <div className="ml-[17px] flex"><I w={18} h={22} vb="0 0 18 22"><path d="M0 11h5" stroke="#d9a92e" strokeWidth="2" /><path d="M6 5l3-3h8v14l-3 3H6z" fill="#16c016" stroke="#222" /></I></div>
            <div className="ml-[2px] w-[52px] text-[14px]">Convert</div>
            <div className="ml-[2px]"><Caret c="#888" /></div>
            <div className="ml-[12px] mt-[10px]"><Caret c="#222" /></div>
          </div>
          {/* viewport */}
          <div className="relative h-[542px] bg-linear-to-b from-[#6a88da] to-white shrink-0 overflow-hidden">
            <MeshModel />
            <Triad />
            <div className="absolute left-[1378px] top-[17px] w-[104px] text-white font-['Roboto',sans-serif]">
              <div className="flex justify-end"><span className="inline-block font-bold text-[38px] leading-[28px] scale-x-[0.79] origin-right whitespace-nowrap">ANSYS</span></div>
              <div className="flex justify-end"><span className="inline-block text-[24px] leading-[26px] scale-x-[0.84] origin-right whitespace-nowrap">2020 <span className="font-bold">R2</span></span></div>
              <div className="h-[2px] bg-[#dfe7f7] mt-[7px]" />
              <div className="text-[15px] mt-[8px] leading-[14px] tracking-[4px] whitespace-nowrap">ACADEMIC</div>
            </div>
            <div className="absolute left-[526px] top-[476px] w-[990px] h-[56px] text-[14px] text-[#333]">
              <div className="flex h-[14px] relative">
                <span className="w-[224px] -ml-[14px]">0.00</span>
                <span className="w-[229px]">20.00</span>
                <span className="whitespace-nowrap">40.00 (mm)</span>
              </div>
              <div className="flex h-[11px] border border-[#222] w-[457px] mt-[3px]">
                <div className="w-[115px] bg-black" />
                <div className="w-[113px] bg-white" />
                <div className="w-[114px] bg-black" />
                <div className="flex-1 bg-white" />
              </div>
              <div className="flex h-[14px] mt-[4px] pl-[96px]">
                <span className="w-[228px]">10.00</span>
                <span>30.00</span>
              </div>
            </div>
          </div>
          <div className="h-[6px] bg-white border-b border-[#dcdce0] shrink-0" />
          <Hdr t="Mesh Metrics" />
          <div className="flex flex-1 min-h-0 bg-white">
            <div className="w-[1491px] shrink-0">
              <div className="ml-[12px] mt-[19px] w-[92px] h-[30px] bg-[#efefef] border-r-2 border-b-2 border-[#888] border-t border-l border-t-[#ccc] border-l-[#ddd] flex items-center justify-center text-[15px] text-[#333]">Controls</div>
              <div className="mt-[5px]"><Chart /></div>
            </div>
            <div className="w-[20px] bg-[#f0f0f0] flex flex-col items-center">
              <div className="mt-[24px]"><Chev up /></div>
              <div className="mt-[8px] w-full h-[104px] bg-[#cdcdcd]" />
              <div className="mt-[50px]"><Chev /></div>
            </div>
          </div>
        </div>
      </div>
      {/* status */}
      <div className="h-[25px] bg-[#007acc] text-[#dcecf8] flex items-center shrink-0 whitespace-nowrap">
        <span className="ml-[10px]">Ready</span>
        <span className="ml-[1234px] flex"><I w={19} h={20} vb="0 0 19 20"><path d="M2 6h13l2 7-8 2-4 4v-4L2 13z" fill="#e8c23a" /><circle cx="10" cy="7" r="6" fill="#23409a" stroke="#fff" /><path d="M10 5v5" stroke="#fff" strokeWidth="2" /></I></span>
        <span className="ml-[4px] w-[76px]">2 Messages</span>
        <span className="ml-[22px] w-[83px] text-[14.2px]">No Selection</span>
        <span className="ml-[31px] w-[20px]"><svg width="10" height="6" viewBox="0 0 10 6"><path d="M0 6h10L5 0z" fill="#fff" /></svg></span>
        <span className="ml-[-6px] w-[201px] text-[14.4px]">Metric (mm, kg, N, s, mV, mA)</span>
        <span className="ml-[15px] w-[53px]">Degrees</span>
        <span className="ml-[15px] w-[33px]">rad/s</span>
        <span className="ml-[15px]">Celsius</span>
      </div>
      {/* taskbar */}
      <div className="h-[50px] bg-[#d6d6d6] flex items-stretch shrink-0">
        <div className="w-[62px] flex items-center justify-center shrink-0 pr-[2px]"><svg width="20" height="20" viewBox="0 0 20 20"><path d="M0 3l8-1.2V9.5H0zM9 1.7L20 0v9.5H9zM0 10.5h8v7.7L0 17zM9 10.5h11V20L9 18.3z" fill="#111" /></svg></div>
        <div className="w-[428px] bg-white flex items-center shrink-0 my-[1px]">
          <span className="ml-[12px] flex"><svg width="22" height="24" viewBox="0 0 22 24"><circle cx="13" cy="9" r="7" fill="none" stroke="#222" strokeWidth="1.3" /><path d="M8 14L1 23" stroke="#222" strokeWidth="1.3" /></svg></span>
          <span className="ml-[14px] text-[18px] text-[#333]">Type here to search</span>
        </div>
        <div className="w-[59px] flex items-center justify-center shrink-0"><div className="w-[20px] h-[20px] rounded-full border-[3px] border-[#222] ml-[-1px]" /></div>
        <div className="w-[63.3px] flex items-center justify-center shrink-0"><svg width="22" height="20" viewBox="0 0 22 20"><path d="M1 1h13M1 19h13M4 6h9v8H4zM1 5h3M1 15h3M19 1v4M19 8v4M19 15v4" stroke="#222" strokeWidth="1.5" fill="none" /></svg></div>
        <TB><svg width="24" height="30" viewBox="0 0 24 30"><path d="M2 6L14 0l8 3v24l-8 3-12-6 12 2V5L7 8v12l-5 4z" fill="#d83b01" /><path d="M14 0l8 3v24l-8 3z" fill="#eb5e1c" /><path d="M2 6l5 2v12l-5 4z" fill="#a4262c" /></svg></TB>
        <TB on><svg width="28" height="26" viewBox="0 0 28 26"><path d="M1 2h11l3 3h12v19H1z" fill="#f9d44e" /><path d="M1 2h11l3 3H1z" fill="#d8a020" /><path d="M8 24v-9h12v9h-4v-5h-4v5z" fill="#2f86c8" /></svg></TB>
        <TB><svg width="30" height="30" viewBox="0 0 30 30"><path d="M15 1a14 14 0 0 1 14 14c0 5-4 7-8 7-5 0-8-3-8-6 0-2 1-3 3-4-7 0-10 5-8 10 2 4 6 7 11 7-9 1-18-5-18-15A14 14 0 0 1 15 1z" fill="#1268c8" /><path d="M15 1a14 14 0 0 1 14 14c0 4-3 7-8 7 4-2 5-8 0-11-3-2-6-2-9-1-4 1-8 4-9 8A14 14 0 0 1 15 1z" fill="#36c77b" /></svg></TB>
        <TB><svg width="30" height="32" viewBox="0 0 30 32"><path d="M15 0l15 13v19H0V13z" fill="#1a5fa8" /><rect x="0" y="13" width="30" height="19" fill="#3fb5ea" /><path d="M0 13l15 11 15-11v2L15 27 0 15z" fill="#fff" /></svg></TB>
        <TB><div className="w-[30px] h-[38px] bg-[#1ea7d7] flex items-center justify-center text-white font-bold text-[22px] border-r-[6px] border-[#3fc2ea]">L</div></TB>
        <TB><svg width="28" height="28" viewBox="0 0 28 28"><circle cx="14" cy="14" r="14" fill="#111" /><path d="M5 4c4 2 7 5 9 8 2-3 5-6 9-8M3 23c3-6 7-9 11-11 4 2 8 5 11 11" stroke="#d6d6d6" strokeWidth="1.6" fill="none" /></svg></TB>
        <TB><svg width="28" height="22" viewBox="0 0 28 22"><path d="M1 12l5-5 5 6L23 1l4 4-16 16z" fill="#2564cf" /><path d="M1 12l5-5 5 6-3 8z" fill="#3b8fe8" /></svg></TB>
        <TB on><svg width="30" height="30" viewBox="0 0 30 30"><path d="M15 15L2.5 7A14 14 0 0 1 28 9H15z" fill="#d93025" /><path d="M15 29A14 14 0 0 1 2.5 7L9 18z" fill="#188038" /><path d="M28 9a14 14 0 0 1-13 20l6-11z" fill="#fbbc04" /><circle cx="15" cy="15" r="6" fill="#4285f4" stroke="#fff" strokeWidth="2" /></svg></TB>
        <TB><div className="w-[28px] h-[33px] rounded-[2px] bg-[#9e1212] flex items-center justify-center"><svg width="20" height="20" viewBox="0 0 20 20"><path d="M2 17c3-2 6-8 7-15 0 5 3 9 9 10-6 0-11 1-16 5z" fill="none" stroke="#fff" strokeWidth="1.8" /></svg></div></TB>
        <TB on><svg width="34" height="32" viewBox="0 0 34 32"><circle cx="23" cy="6" r="4" fill="#7b83c9" /><circle cx="14" cy="5" r="4.5" fill="#5b5fc7" /><rect x="12" y="10" width="18" height="14" rx="2" fill="#7b83c9" /><rect x="1" y="8" width="16" height="16" rx="1" fill="#464eb8" /><text x="9" y="21" textAnchor="middle" fontSize="12" fontWeight="700" fill="#fff" fontFamily="Noto Sans">T</text><circle cx="25" cy="24" r="7.5" fill="#fff" /><circle cx="25" cy="24" r="6" fill="#92c353" /><path d="M22 24l2 2 4-4" stroke="#fff" strokeWidth="1.5" fill="none" /></svg></TB>
        <TB on><Square c="#8d8d8d" c2="#b5b5b5" t="WB" /></TB>
        <TB on><Square c="#5a2d78" c2="#8a5fa0" t="M" /></TB>
        <TB on><Square c="#1f7ae0" c2="#4fa0ee" t="F" /></TB>
        <TB on active><svg width="32" height="36" viewBox="0 0 32 36"><path d="M8 2c10-3 20 4 18 14-1 5-5 8-9 9 3-4 4-7 3-12-1-4-6-7-12-11z" fill="#c9492b" /><path d="M15 5l7 9-7 9z" fill="#aaa" /><path d="M4 8c-3 6 0 12 5 15" stroke="#c9492b" strokeWidth="3" fill="none" /><circle cx="8" cy="29" r="4" fill="none" stroke="#1c6fb8" strokeWidth="3" /><circle cx="19" cy="31" r="4" fill="none" stroke="#2aa0d8" strokeWidth="3" /></svg></TB>
        <div className="ml-[8px] my-[13px] w-[60px] bg-white flex items-stretch p-[3px] shrink-0">
          <div className="flex-1 bg-[#1a9850] text-white flex items-center justify-center text-[17px]">94%</div>
          <div className="w-[5px] bg-black" />
        </div>
        <div className="w-[27px] flex items-center justify-center shrink-0"><div className="w-[2px] h-[12px] bg-[#888] ml-[-4px]" /></div>
        <div className="w-[31px] flex items-center justify-center shrink-0"><svg width="16" height="10" viewBox="0 0 16 10"><path d="M1 9l7-7 7 7" fill="none" stroke="#222" strokeWidth="1.4" /></svg></div>
        <div className="w-[31px] flex items-center justify-center shrink-0"><svg width="20" height="15" viewBox="0 0 20 15"><path d="M4 14a3.5 3.5 0 0 1 0-7 6 6 0 0 1 11-1 4 4 0 0 1 1 8z" fill="#c9c9c9" stroke="#222" /></svg></div>
        <div className="w-[30px] flex items-center justify-center shrink-0"><svg width="20" height="15" viewBox="0 0 20 15"><rect x="4" y="3" width="15" height="10" fill="#222" /><rect x="0" y="0" width="4" height="6" fill="none" stroke="#222" /></svg></div>
        <div className="w-[29px] flex items-center justify-center shrink-0"><svg width="20" height="18" viewBox="0 0 20 18"><path d="M2 16A16 16 0 0 1 18 1M6 16A11 11 0 0 1 16 6M10 16a6 6 0 0 1 5-5" fill="none" stroke="#333" strokeWidth="1.1" /><circle cx="3" cy="16" r="1.3" fill="#333" /></svg></div>
        <div className="w-[29px] flex items-center justify-center shrink-0"><svg width="18" height="18" viewBox="0 0 18 18"><path d="M2 6h3l4-4v14l-4-4H2z" fill="none" stroke="#333" /><path d="M11 6a4 4 0 0 1 0 6M13 4a7 7 0 0 1 0 10" fill="none" stroke="#333" /></svg></div>
        <div className="w-[46px] flex items-center justify-center shrink-0 text-[#333] text-[14px]">ENG</div>
        <div className="w-[92px] flex flex-col items-center justify-center gap-[10px] shrink-0 text-[#333] text-[14px]"><span>20:49</span><span>15-03-2021</span></div>
        <div className="w-[48px] flex items-center justify-center shrink-0"><svg width="22" height="24" viewBox="0 0 22 24"><path d="M2 3h18v15h-6l-3 4-3-4H2z" fill="none" stroke="#222" strokeWidth="1.2" /></svg></div>
      </div>
    </div>
  );
}
